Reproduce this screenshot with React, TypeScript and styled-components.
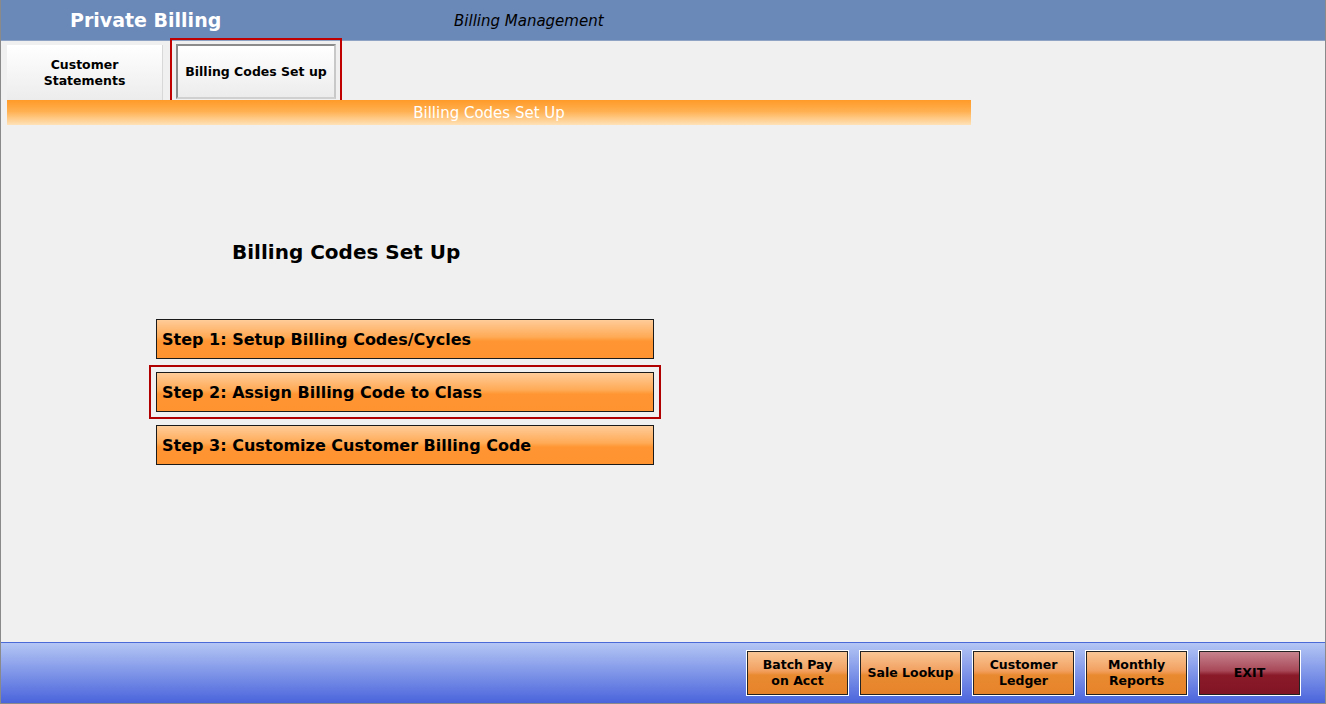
import styled, { createGlobalStyle } from "styled-components";

const Global = createGlobalStyle`
    html, body { margin: 0; padding: 0; background: #f0f0f0; }
    body { font-family: "DejaVu Sans", Verdana, sans-serif; }
`;

const Frame = styled.div`
    width: 1326px;
    height: 704px;
    box-sizing: border-box;
    border: 1px solid #8a8a8a;
    border-top: none;
    display: flex;
    flex-direction: column;
    background: #f0f0f0;
    overflow: hidden;
`;

const Header = styled.div`
    height: 40px;
    background: #6a88b8;
    border-bottom: 1px solid #8fa3c4;
    display: flex;
    align-items: center;
    flex-shrink: 0;
`;

const AppTitle = styled.div`
    width: 383px;
    padding-left: 69px;
    box-sizing: border-box;
    color: #fff;
    font-weight: bold;
    font-size: 19px;
`;

const SubTitle = styled.div`
    font-family: "DejaVu Sans", Verdana, sans-serif;
    font-style: italic;
    font-size: 15px;
    color: #000;
    margin-left: 70px;
    margin-top: 2px;
`;

const TabRow = styled.div`
    display: flex;
    align-items: flex-start;
    gap: 13px;
    padding: 4px 0 0 6px;
    height: 59px;
    box-sizing: border-box;
    flex-shrink: 0;
`;

const Tab = styled.div<{ $active?: boolean }>`
    width: ${p => (p.$active ? "160px" : "156px")};
    height: ${p => (p.$active ? "55px" : "55px")};
    margin-top: ${p => (p.$active ? "-1px" : "0")};
    box-sizing: border-box;
    display: flex;
    align-items: center;
    justify-content: center;
    text-align: center;
    font-weight: bold;
    font-size: 12.5px;
    line-height: 16px;
    color: #000;
    background: linear-gradient(#ffffff, #ececec);
    border: ${p => (p.$active ? "2px solid #8c8c8c" : "none")};
    border-right: ${p => (p.$active ? "2px solid #c8c8c8" : "1px solid #d8d8d8")};
    border-bottom: ${p => (p.$active ? "2px solid #d0d0d0" : "none")};
    outline: ${p => (p.$active ? "2px solid #c00000" : "none")};
    outline-offset: 4px;
`;

const Banner = styled.div`
    margin-left: 6px;
    width: 964px;
    height: 25px;
    background: linear-gradient(#ff9a28 0%, #ffb050 45%, #ffe2b8 100%);
    color: #fff;
    font-size: 15px;
    display: flex;
    align-items: center;
    justify-content: center;
    flex-shrink: 0;
`;

const Content = styled.div`
    flex: 1;
    display: flex;
    flex-direction: column;
    padding-left: 155px;
`;

const Heading = styled.h1`
    margin: 113px 0 0 76px;
    font-size: 20px;
    font-weight: bold;
    color: #000;
    height: 28px;
    line-height: 28px;
`;

const StepList = styled.div`
    display: flex;
    flex-direction: column;
    gap: 13px;
    margin-top: 53px;
`;

const StepButton = styled.div<{ $focused?: boolean }>`
    width: 498px;
    height: 40px;
    box-sizing: border-box;
    border: 1px solid #1a1a1a;
    background: linear-gradient(#ffcc99 0%, #ffaa55 45%, #ff9633 55%, #ff9330 100%);
    display: flex;
    align-items: center;
    padding-left: 5px;
    font-weight: bold;
    font-size: 16px;
    color: #000;
    outline: ${p => (p.$focused ? "2px solid #b00000" : "none")};
    outline-offset: 5px;
`;

const Footer = styled.div`
    height: 60px;
    border-top: 1px solid #4a6ad8;
    background: linear-gradient(#b4c6f4, #4a64dc);
    display: flex;
    justify-content: flex-end;
    align-items: center;
    gap: 10px;
    padding-right: 24px;
    flex-shrink: 0;
`;

const FooterButton = styled.div<{ $exit?: boolean }>`
    width: 103px;
    height: 46px;
    box-sizing: border-box;
    border: 1px solid #fff;
    outline: 1px solid #222;
    outline-offset: -2px;
    background: ${p =>
        p.$exit
            ? "linear-gradient(#c88690 0%, #a84858 45%, #8a1a28 55%, #801424 100%)"
            : "linear-gradient(#fac898 0%, #f2a060 45%, #e98a30 55%, #e6832a 100%)"};
    display: flex;
    align-items: center;
    justify-content: center;
    text-align: center;
    font-weight: bold;
    font-size: 12.5px;
    line-height: 16px;
    color: #000;
    white-space: pre-line;
`;

const footerButtons = [
    "Batch  Pay\non Acct",
    "Sale Lookup",
    "Customer\nLedger",
    "Monthly\nReports",
];

const steps = [
    "Step 1: Setup Billing Codes/Cycles",
    "Step 2: Assign Billing Code to Class",
    "Step 3: Customize Customer Billing Code",
];

export default function App() {
    return (
        <>
            <Global />
            <Frame>
                <Header>
                    <AppTitle>Private Billing</AppTitle>
                    <SubTitle>Billing Management</SubTitle>
                </Header>
                <TabRow>
                    <Tab>Customer<br />Statements</Tab>
                    <Tab $active>Billing Codes Set up</Tab>
                </TabRow>
                <Banner>Billing Codes Set Up</Banner>
                <Content>
                    <Heading>Billing Codes Set Up</Heading>
                    <StepList>
                        {steps.map((s, i) => (
                            <StepButton key={s} $focused={i === 1}>{s}</StepButton>
                        ))}
                    </StepList>
                </Content>
                <Footer>
                    {footerButtons.map(b => (
                        <FooterButton key={b}>{b}</FooterButton>
                    ))}
                    <FooterButton $exit>EXIT</FooterButton>
                </Footer>
            </Frame>
        </>
    );
}
